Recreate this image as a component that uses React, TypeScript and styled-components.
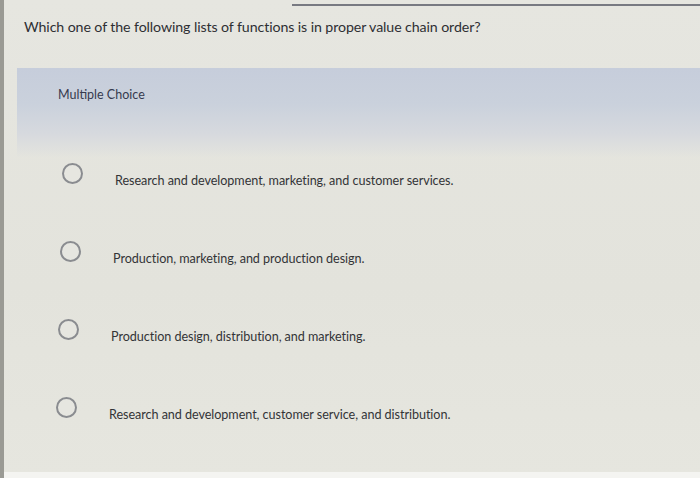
import React from "react";
import styled, { createGlobalStyle } from "styled-components";

const Global = createGlobalStyle`
  html, body { margin: 0; padding: 0; }
  body { background: #e4e4de; font-family: "Lato", "Open Sans", "Liberation Sans", sans-serif; }
`;

const Page = styled.div`
  position: relative;
  width: 700px;
  height: 478px;
  box-sizing: border-box;
  border-left: 4px solid #9a9a94;
  background: linear-gradient(180deg, #e6e6e0 0%, #e3e3dc 60%, #e6e6df 100%);
  display: flex;
  flex-direction: column;
  overflow: hidden;
`;

const TopRule = styled.div`
  height: 2px;
  margin: 4px 0 0 288px;
  background: #5d5f6a;
  opacity: 0.8;
`;

const Question = styled.div`
  padding: 12px 0 0 20px;
  font-size: 14.2px;
  color: #2e2f33;
  letter-spacing: -0.1px;
`;

const Panel = styled.div`
  margin: 33px 0 0 13px;
  padding: 19px 0 0 41px;
  height: 90px;
  box-sizing: border-box;
  background: linear-gradient(180deg, #c6cddb 0%, #cad1dc 40%, #d6d9de 72%, rgba(228, 228, 221, 0) 100%);
`;

const PanelLabel = styled.div`
  font-size: 12.5px;
  color: #363a4e;
`;

const Options = styled.div`
  display: flex;
  flex-direction: column;
  gap: 56px;
  padding: 0 0 0 58px;
  margin-top: 4px;
`;

const Option = styled.div<{ $shift: number }>`
  display: flex;
  align-items: center;
  height: 22px;
  margin-left: ${(p) => -p.$shift}px;
`;

const Radio = styled.span`
  width: 21px;
  height: 21px;
  border-radius: 50%;
  border: 2px solid #8a8c90;
  box-sizing: border-box;
  flex-shrink: 0;
  margin-right: 32px;
  background: #e6e6e0;
`;

const OptionText = styled.span`
  font-size: 12.6px;
  color: #333437;
  margin-top: 15px;
  letter-spacing: -0.05px;
`;

const BottomStrip = styled.div`
  margin-top: auto;
  height: 6px;
  background: #f4f4f1;
`;

const options = [
  "Research and development, marketing, and customer services.",
  "Production, marketing, and production design.",
  "Production design, distribution, and marketing.",
  "Research and development, customer service, and distribution.",
];

export default function App() {
  return (
    <>
      <Global />
      <Page>
        <TopRule />
        <Question>Which one of the following lists of functions is in proper value chain order?</Question>
        <Panel>
          <PanelLabel>Multiple Choice</PanelLabel>
        </Panel>
        <Options>
          {options.map((o, i) => (
            <Option key={o} $shift={i * 2}>
              <Radio />
              <OptionText>{o}</OptionText>
            </Option>
          ))}
        </Options>
        <BottomStrip />
      </Page>
    </>
  );
}
